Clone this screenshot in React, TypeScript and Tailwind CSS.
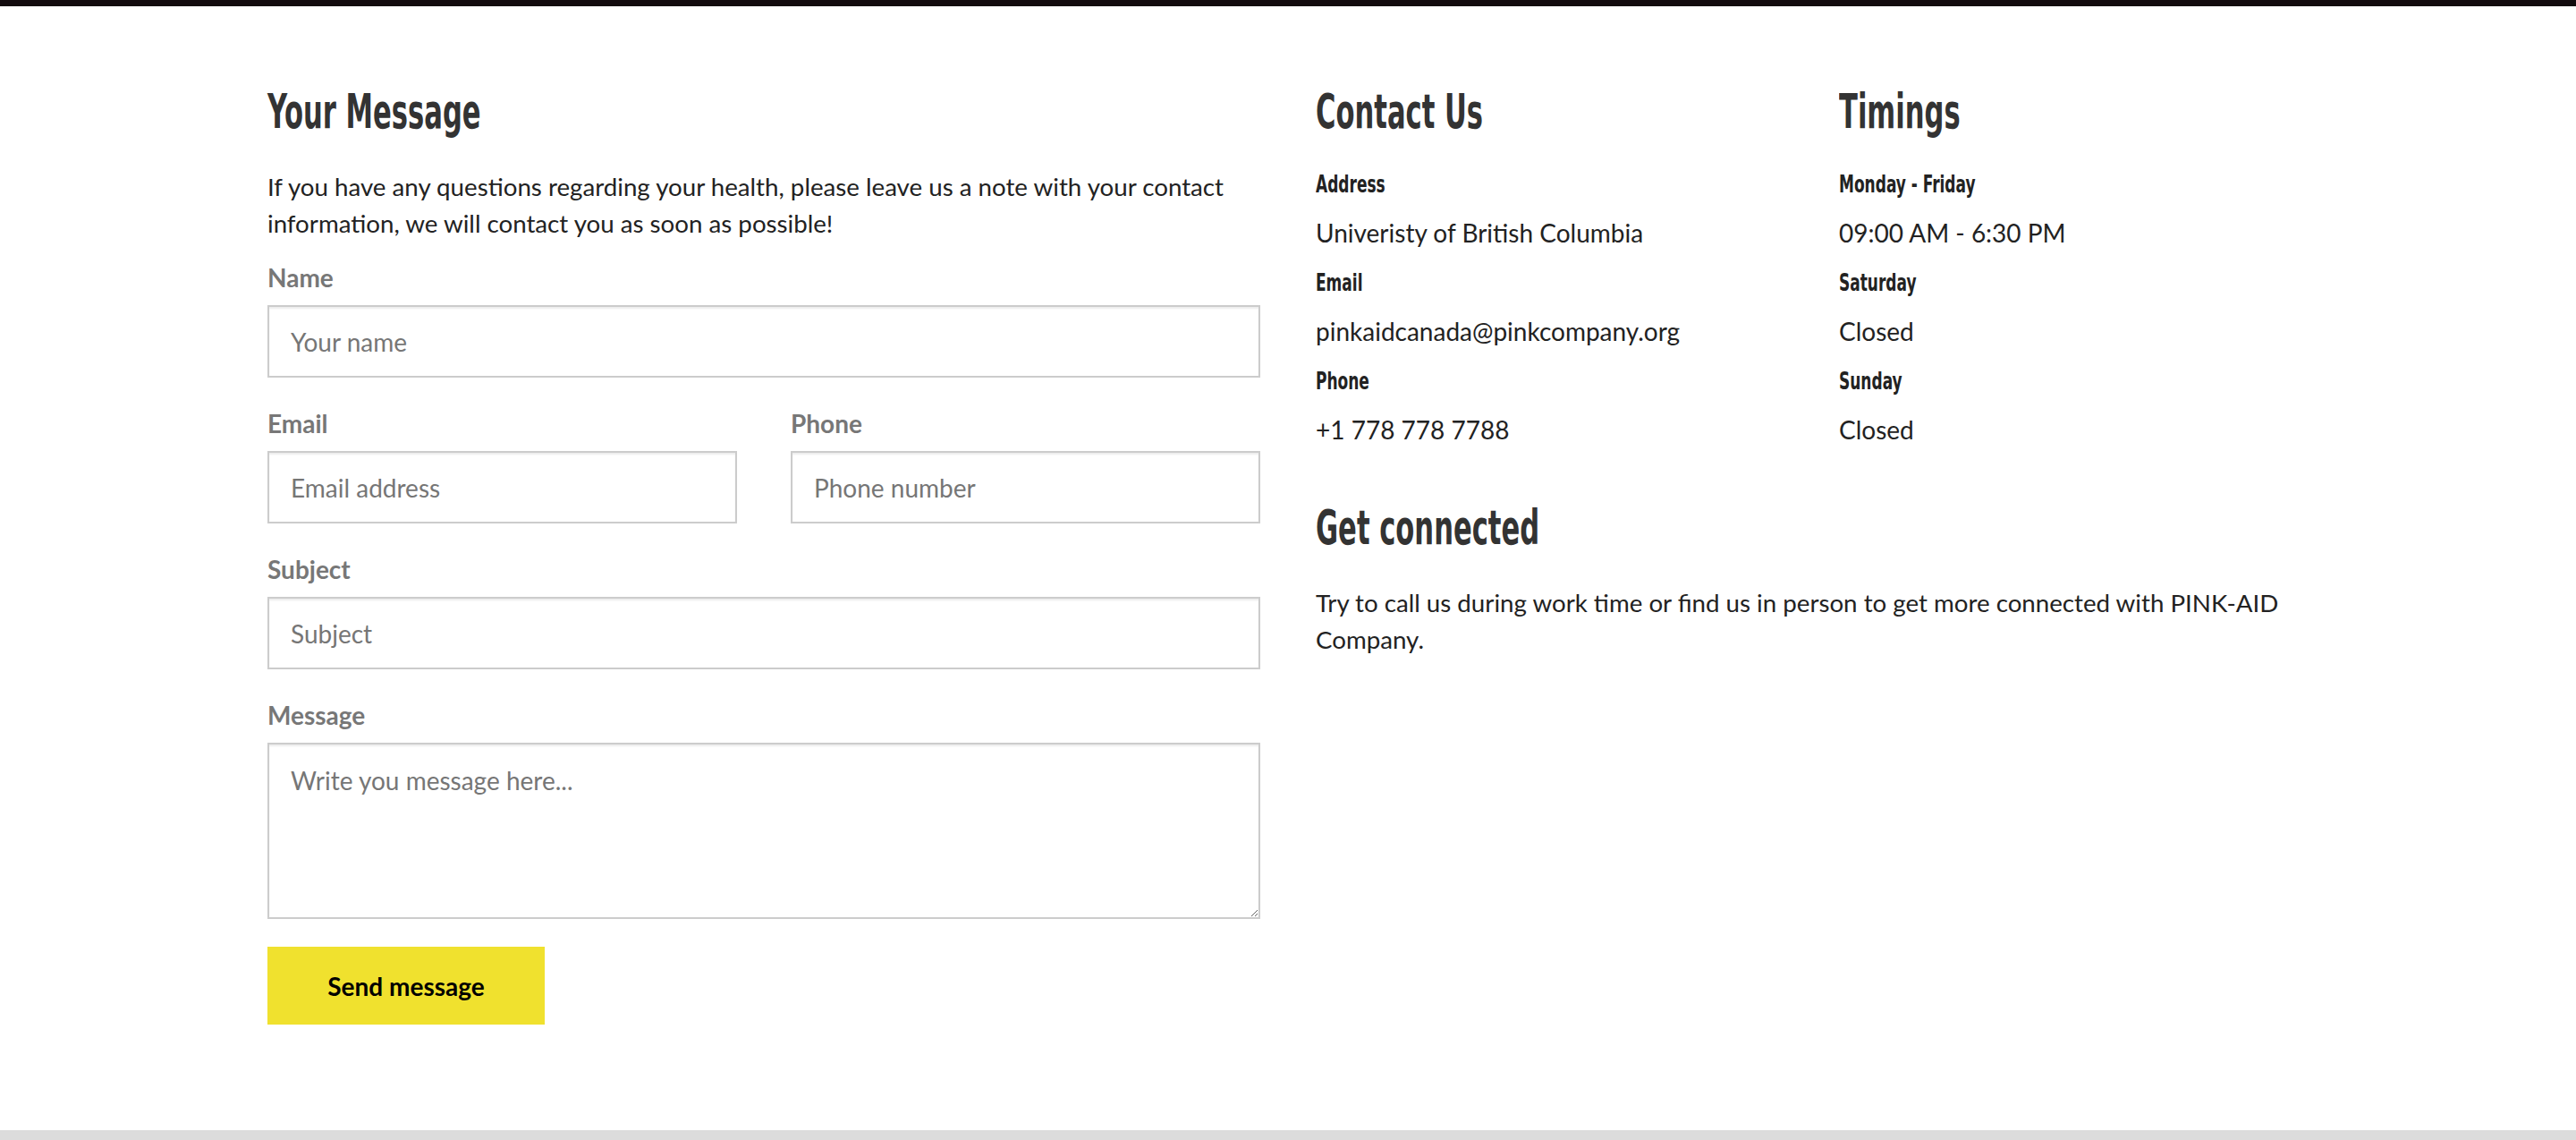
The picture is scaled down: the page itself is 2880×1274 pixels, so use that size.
export default function App() {
  const heading =
    "inline-block origin-left scale-x-[0.63] font-['DejaVu_Sans_Condensed','DejaVu_Sans',sans-serif] font-bold text-[54px] leading-[56px] text-[#333] whitespace-nowrap";
  const sub =
    "inline-block origin-left scale-x-[0.7] font-['DejaVu_Sans_Condensed','DejaVu_Sans',sans-serif] font-bold text-[27px] leading-[55px] text-[#222] whitespace-nowrap";
  const label = "block text-[28px] font-bold text-[#777] leading-[40px] mb-[11px]";
  const field =
    "w-full h-[81px] border-2 border-[#ccc] bg-white px-[24px] text-[28px] text-[#333] placeholder:text-[#767676] outline-none shadow-[inset_0_2px_2px_rgba(0,0,0,0.075)]";

  return (
    <div className="min-h-screen bg-white flex flex-col font-['Lato',sans-serif] text-[#222]">
      <div className="h-[7px] bg-[#130b0e]" />

      <main className="w-[2282px] mx-auto flex gap-[62px] pt-[90px]">
        {/* form */}
        <section className="w-[1110px]">
          <div className="mb-[35px]">
            <h2 className={heading}>Your Message</h2>
          </div>
          <p className="text-[27.7px] leading-[41px] mb-[20px]">
            If you have any questions regarding your health, please leave us a note with your contact information, we
            will contact you as soon as possible!
          </p>

          <form className="flex flex-col gap-[31px]">
            <div>
              <label className={label}>Name</label>
              <input className={field} placeholder="Your name" />
            </div>
            <div className="grid grid-cols-2 gap-[60px]">
              <div>
                <label className={label}>Email</label>
                <input className={field} placeholder="Email address" />
              </div>
              <div>
                <label className={label}>Phone</label>
                <input className={field} placeholder="Phone number" />
              </div>
            </div>
            <div>
              <label className={label}>Subject</label>
              <input className={field} placeholder="Subject" />
            </div>
            <div>
              <label className={label}>Message</label>
              <textarea
                className={field.replace("h-[81px]", "h-[197px]") + " block pt-[20px] leading-[40px]"}
                placeholder="Write you message here..."
              />
            </div>
            <div>
              <button
                type="button"
                className="w-[310px] h-[87px] bg-[#f0e12e] text-[28px] font-bold text-black"
              >
                Send message
              </button>
            </div>
          </form>
        </section>

        {/* contact info */}
        <section className="w-[1110px]">
          <div className="grid grid-cols-2 gap-[60px]">
            <div>
              <div className="mb-[25px]">
                <h2 className={heading}>Contact Us</h2>
              </div>
              <div><span className={sub}>Address</span></div>
              <p className="text-[28px] leading-[55px]">Univeristy of British Columbia</p>
              <div><span className={sub}>Email</span></div>
              <p className="text-[28px] leading-[55px]">pinkaidcanada@pinkcompany.org</p>
              <div><span className={sub}>Phone</span></div>
              <p className="text-[28px] leading-[55px]">+1 778 778 7788</p>
            </div>
            <div>
              <div className="mb-[25px]">
                <h2 className={heading}>Timings</h2>
              </div>
              <div><span className={sub}>Monday - Friday</span></div>
              <p className="text-[28px] leading-[55px]">09:00 AM - 6:30 PM</p>
              <div><span className={sub}>Saturday</span></div>
              <p className="text-[28px] leading-[55px]">Closed</p>
              <div><span className={sub}>Sunday</span></div>
              <p className="text-[28px] leading-[55px]">Closed</p>
            </div>
          </div>

          <div className="mt-[54px] mb-[35px]">
            <h2 className={heading}>Get connected</h2>
          </div>
          <p className="text-[27.7px] leading-[41px]">
            Try to call us during work time or find us in person to get more connected with PINK-AID Company.
          </p>
        </section>
      </main>

      <div className="mt-auto h-[11px] bg-[#dcdcdc]" />
    </div>
  );
}
